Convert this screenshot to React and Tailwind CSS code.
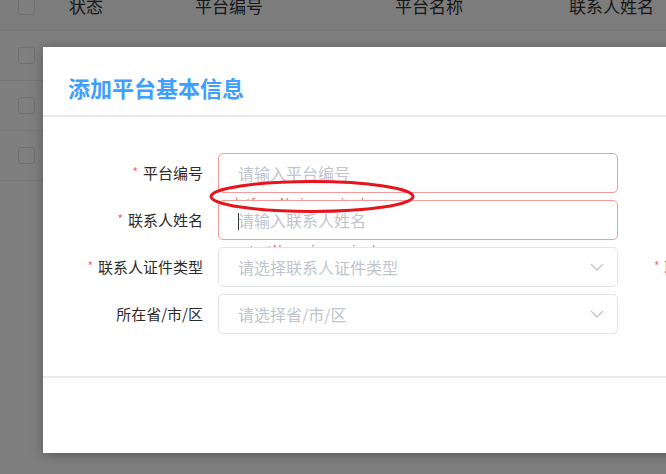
import React from "react";

const FONT = { fontFamily: '"Noto Sans CJK SC", "Noto Sans", sans-serif' };

const columns = ["状态", "平台编号", "平台名称", "联系人姓名"];

const rows = [1, 2, 3];

const Checkbox = () => (
  <span className="block w-[17px] h-[17px] rounded-[3px] border border-[#dcdfe6] bg-white" />
);

const Chevron = () => (
  <svg width="14" height="8" viewBox="0 0 14 8" fill="none">
    <path d="M1 1L7 7L13 1" stroke="#c0c4cc" strokeWidth="1.3" />
  </svg>
);

const FormRow = ({ label, required, placeholder, select, error, caret, invalid, extra }) => (
  <div className="flex items-center h-[40px] mb-[7px]">
    <div className="w-[175px] shrink-0 pr-[15px] text-right text-[15px] text-[#2b2b2b] whitespace-nowrap">
      {required && <span className="text-[#f56c6c] text-[12px] mr-[5px] align-[2px]">*</span>}
      {label}
    </div>
    <div
      className={`relative w-[400px] h-[40px] shrink-0 rounded-[5px] border bg-white flex items-center pl-[19px] pr-[13px] ${
        invalid ? "border-[#f59a9a]" : "border-[#e1e4eb]"
      }`}
    >
      {caret && <span className="absolute left-[19px] top-[12px] w-px h-[17px] bg-[#333]" />}
      <span className="flex-1 text-[16px] text-[#c0c4cc] whitespace-nowrap">{placeholder}</span>
      {select && <Chevron />}
      {error && (
        <span className="absolute left-[8px] top-full mt-[4px] text-[13px] leading-none text-[#f56c6c] whitespace-nowrap">
          {error}
        </span>
      )}
    </div>
    {extra && (
      <div className="ml-[36px] text-[15px] text-[#2b2b2b] whitespace-nowrap">
        <span className="text-[#f56c6c] text-[12px] mr-[5px] align-[2px]">*</span>
        {extra}
      </div>
    )}
  </div>
);

export default function App() {
  return (
    <div className="relative w-full h-screen overflow-hidden bg-white" style={FONT}>
      {/* table behind the dialog */}
      <div className="w-[1200px]">
        <div className="grid grid-cols-[69px_126px_200px_174px_1fr] items-center h-[50px] mt-[-19px] border-b border-[#ebeef5] bg-[#f9f9f9]">
          <div className="pl-[18px] pt-[2px]">
            <Checkbox />
          </div>
          {columns.map((c) => (
            <div key={c} className="text-[17px] text-[#303133] whitespace-nowrap">
              {c}
            </div>
          ))}
        </div>
        {rows.map((r) => (
          <div key={r} className="flex items-center h-[50px] border-b border-[#ebeef5] pl-[18px]">
            <Checkbox />
          </div>
        ))}
      </div>

      {/* mask */}
      <div className="absolute inset-0 bg-black/50" />

      {/* dialog */}
      <div className="absolute left-[43px] top-[47px] w-[1100px] h-[406px] bg-white shadow-[0_2px_12px_rgba(0,0,0,0.3)] flex flex-col">
        <div className="h-[68px] flex items-center pl-[25px] pt-[12px]">
          <h2 className="text-[22px] font-bold text-[#409eff] leading-none">添加平台基本信息</h2>
        </div>
        <div className="h-[2px] bg-[#e9e9e9]" />
        <div className="h-[259px] pt-[36px]">
          <FormRow
            label="平台编号"
            required
            invalid
            placeholder="请输入平台编号"
            error="platformNo is required"
          />
          <FormRow
            label="联系人姓名"
            required
            invalid
            caret
            placeholder="请输入联系人姓名"
            error="contactName is required"
          />
          <FormRow
            label="联系人证件类型"
            required
            select
            placeholder="请选择联系人证件类型"
            extra="联系人证件号码"
          />
          <FormRow label="所在省/市/区" select placeholder="请选择省/市/区" />
        </div>
        <div className="h-[2px] bg-[#e9e9e9]" />
        <div className="flex-1" />
      </div>

      {/* red hand-drawn annotation */}
      <svg className="absolute left-[206px] top-[177px]" width="212" height="40" viewBox="0 0 212 40">
        <ellipse cx="106" cy="19.5" rx="101" ry="15" fill="none" stroke="#e8141c" strokeWidth="3" />
      </svg>
    </div>
  );
}
